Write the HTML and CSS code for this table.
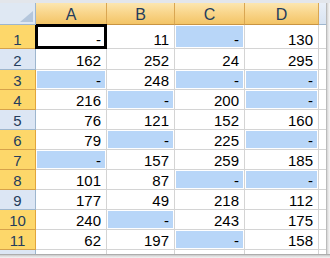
FILE: index.html
```html
<!DOCTYPE html>
<html>
<head>
<meta charset="utf-8">
<link rel="stylesheet" href="styles.css">
</head>
<body>
<div class="frame">
  <div class="topbar"></div>
  <div class="mid">
    <div class="sheet">
      <div class="corner"><span class="tri"></span></div>
      <div class="ch sel">A</div>
      <div class="ch sel">B</div>
      <div class="ch sel">C</div>
      <div class="ch sel">D</div>
      <div class="ch plain"></div>

      <div class="rh sel">1</div>
      <div class="c active">-</div><div class="c">11</div><div class="c b">-</div><div class="c">130</div><div class="c e"></div>

      <div class="rh">2</div>
      <div class="c">162</div><div class="c">252</div><div class="c">24</div><div class="c">295</div><div class="c e"></div>

      <div class="rh sel">3</div>
      <div class="c b">-</div><div class="c">248</div><div class="c b">-</div><div class="c b">-</div><div class="c e"></div>

      <div class="rh sel">4</div>
      <div class="c">216</div><div class="c b">-</div><div class="c">200</div><div class="c b">-</div><div class="c e"></div>

      <div class="rh">5</div>
      <div class="c">76</div><div class="c">121</div><div class="c">152</div><div class="c">160</div><div class="c e"></div>

      <div class="rh sel">6</div>
      <div class="c">79</div><div class="c b">-</div><div class="c">225</div><div class="c b">-</div><div class="c e"></div>

      <div class="rh sel">7</div>
      <div class="c b">-</div><div class="c">157</div><div class="c">259</div><div class="c">185</div><div class="c e"></div>

      <div class="rh sel">8</div>
      <div class="c">101</div><div class="c">87</div><div class="c b">-</div><div class="c b">-</div><div class="c e"></div>

      <div class="rh">9</div>
      <div class="c">177</div><div class="c">49</div><div class="c">218</div><div class="c">112</div><div class="c e"></div>

      <div class="rh sel">10</div>
      <div class="c">240</div><div class="c b">-</div><div class="c">243</div><div class="c">175</div><div class="c e"></div>

      <div class="rh sel">11</div>
      <div class="c">62</div><div class="c">197</div><div class="c b">-</div><div class="c">158</div><div class="c e"></div>

      <div class="rh last">12</div>
      <div class="c last"></div><div class="c last"></div><div class="c last"></div><div class="c last"></div><div class="c e last"></div>
    </div>
    <div class="rshadow"></div>
  </div>
  <div class="bshadow"></div>
</div>
</body>
</html>
```

FILE: styles.css
```css
html, body {
  margin: 0;
  padding: 0;
  background: #ffffff;
}

.frame {
  width: 330px;
  height: 258px;
  display: flex;
  flex-direction: column;
  overflow: hidden;
  font-family: "Liberation Sans", Arial, sans-serif;
  font-size: 15px;
}

.topbar {
  height: 3px;
  background: #e3e6eb;
  flex: none;
}

.mid {
  display: flex;
  flex: none;
}

.sheet {
  display: grid;
  grid-template-columns: 36px 71px 68px 70px 74px 7px;
  grid-template-rows: 22px 24px 21px repeat(9, 20px) 4px;
  width: 326px;
  overflow: hidden;
}

.sheet > div {
  box-sizing: border-box;
  border-right: 1px solid #d4d4d4;
  border-bottom: 1px solid #d4d4d4;
  overflow: hidden;
  line-height: 17px;
}

.corner {
  background: #dfe8f3;
  position: relative;
  border-right-color: #9eb6ce !important;
  border-bottom-color: #9eb6ce !important;
}

.tri {
  position: absolute;
  right: 2px;
  bottom: 2px;
  width: 13px;
  height: 11px;
  background: #b4c6dc;
  clip-path: polygon(100% 0, 100% 100%, 0 100%);
}

.ch {
  display: flex;
  align-items: center;
  justify-content: center;
  color: #243c5c;
  font-size: 16px;
  padding-top: 1px;
}

.ch.sel {
  background: linear-gradient(#fce6b0, #f9d68c 45%, #f3c466);
  border-right-color: #d9a652 !important;
  border-bottom-color: #c99442 !important;
}

.ch.plain {
  background: linear-gradient(#e9eff8, #d9e4f2);
  border-bottom-color: #9eb6ce !important;
  border-right: none !important;
}

.rh {
  display: flex;
  align-items: flex-end;
  justify-content: center;
  color: #243c5c;
  background: #dce6f4;
  border-right-color: #9eb6ce !important;
  border-bottom-color: #9eb6ce !important;
  font-size: 15px;
}

.rh.sel {
  background: #fdd76a;
  border-right-color: #e1a53c !important;
  border-bottom-color: #d6a24a !important;
}

.rh.last {
  align-items: flex-start;
  padding-top: 1px;
  border-bottom: none !important;
}

.c {
  display: flex;
  align-items: flex-end;
  justify-content: flex-end;
  padding-right: 5px;
  color: #000000;
  background: #ffffff;
}

.c.b {
  background: #b8d6f8;
  box-shadow: inset 0 0 0 1px #ffffff;
}

.c.e {
  border-right: none !important;
}

.c.last {
  border-bottom: none !important;
}

.c.active {
  box-shadow: inset 0 0 0 1px #000000, inset 0 0 0 2px #000000;
  margin: -1px 0 0 -1px;
  border: 1px solid #000 !important;
}

.rshadow {
  width: 4px;
  flex: none;
  background: linear-gradient(to right, #a9a9a9, #d6d6d6 30%, #ececec 70%, #f6f6f6);
}

.bshadow {
  height: 4px;
  flex: none;
  background: linear-gradient(#9a9a9a, #cfcfcf 35%, #e6e6e6 70%, #f3f3f3);
}
```
